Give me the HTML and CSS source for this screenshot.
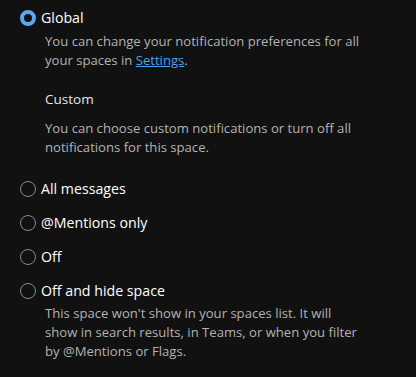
FILE: index.html
```html
<!DOCTYPE html>
<html>
<head>
<meta charset="utf-8">
<link rel="stylesheet" href="styles.css">
</head>
<body>
<div class="panel">
  <div class="option">
    <div class="row">
      <span class="radio checked"></span>
      <span class="label">Global</span>
    </div>
    <p class="desc">You can change your notification preferences for all your spaces in <a class="link" href="#">Settings</a>.</p>
  </div>
  <div class="custom">
    <div class="subhead">Custom</div>
    <p class="desc custom-desc">You can choose custom notifications or turn off all notifications for this space.</p>
  </div>
  <div class="choices">
    <div class="row">
      <span class="radio"></span>
      <span class="label">All messages</span>
    </div>
    <div class="row">
      <span class="radio"></span>
      <span class="label">@Mentions only</span>
    </div>
    <div class="row">
      <span class="radio"></span>
      <span class="label">Off</span>
    </div>
    <div class="option">
      <div class="row">
        <span class="radio"></span>
        <span class="label">Off and hide space</span>
      </div>
      <p class="desc hide-desc">This space won't show in your spaces list. It will show in search results, in Teams, or when you filter by @Mentions or Flags.</p>
    </div>
  </div>
</div>
</body>
</html>
```
FILE: styles.css
```css
html, body {
  margin: 0;
  padding: 0;
  background: #111111;
}
body {
  font-family: "Open Sans", "Noto Sans", sans-serif;
  color: #ffffff;
}
.panel {
  display: flex;
  flex-direction: column;
  padding: 8px 20px 0 20px;
}
.row {
  display: flex;
  align-items: center;
  gap: 5px;
  height: 20px;
}
.radio {
  box-sizing: border-box;
  width: 16px;
  height: 16px;
  border-radius: 50%;
  border: 1px solid #8a8a8a;
  flex: none;
}
.radio.checked {
  border: 4.5px solid #5aa9f0;
  background: #111111;
}
.label {
  font-size: 14.2px;
  line-height: 20px;
  color: #ffffff;
}
.desc {
  margin: 4px 0 0 25px;
  font-size: 13.1px;
  line-height: 19px;
  color: #b3b3b3;
  width: 322px;
}
.link {
  color: #4aa3ef;
  text-decoration: underline;
}
.custom {
  margin-top: 20px;
  padding-left: 25px;
}
.subhead {
  font-size: 13.5px;
  line-height: 19px;
  color: #e6e6e6;
}
.custom-desc {
  margin: 10px 0 0 0;
}
.choices {
  margin-top: 22px;
  display: flex;
  flex-direction: column;
  gap: 14px;
}
.hide-desc {
  margin-top: 3px;
}
```
